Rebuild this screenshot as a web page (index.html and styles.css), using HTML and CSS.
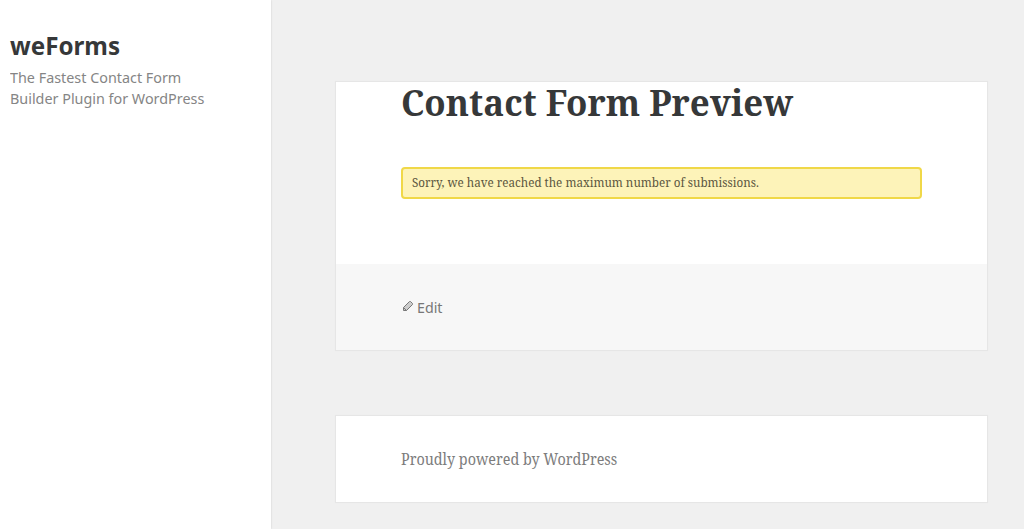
FILE: index.html
```html
<!DOCTYPE html>
<html lang="en">
<head>
<meta charset="utf-8">
<title>Contact Form Preview</title>
<link rel="stylesheet" href="styles.css">
</head>
<body>
<aside class="sidebar">
  <h1 class="site-title">weForms</h1>
  <p class="tagline">The Fastest Contact Form<br>Builder Plugin for WordPress</p>
</aside>
<div class="content">
  <article class="card entry">
    <h2 class="entry-title"><span class="title-text">Contact Form Preview</span></h2>
    <div class="notice"><span class="notice-text">Sorry, we have reached the maximum number of submissions.</span></div>
    <footer class="entry-footer">
      <svg class="edit-icon" viewBox="0 0 12 12" width="12" height="12"><path d="M1.500 10.500V7.500L7.500 1.500h1l2 2v1L4.500 10.500zM1.500 7.500l3 3"/></svg>
      <span class="edit-label">Edit</span>
    </footer>
  </article>
  <footer class="card site-footer"><span class="credit">Proudly powered by WordPress</span></footer>
</div>
</body>
</html>
```
FILE: styles.css
```css
* { box-sizing: border-box; }
body { margin: 0; height: 529px; display: flex; overflow: hidden; background: #f0f0f0; color: #363839; font-family: "Noto Sans", sans-serif; }
.sidebar { width: 271px; height: 529px; padding: 29px 10px 0; background: #fff; box-shadow: 0 0 2px rgba(0,0,0,.15); }
.site-title { margin: 0; font-size: 24.200px; line-height: 34px; font-weight: 700; }
.tagline { margin: 4px 0 0; color: #858585; font-size: 15px; line-height: 21px; white-space: nowrap; transform: scaleX(.957); transform-origin: left; }
.content { width: 651px; margin: 82px 0 0 65px; font-family: "Noto Serif", "Droid Serif", "DejaVu Serif", serif; }
.card { background: #fff; box-shadow: 0 0 1px 1px rgba(0,0,0,.04); }
.entry { height: 268px; display: flex; flex-direction: column; }
.entry-title { margin: 0 65px; height: 85px; font-size: 36px; line-height: 41px; white-space: nowrap; }
.title-text, .notice-text, .credit, .edit-label { display: inline-block; transform-origin: left; }
.title-text { transform: scaleX(.970); }
.notice { height: 32px; margin: 0 65px 65px; padding: 0 8.500px; border: 2px solid #f0d848; border-radius: 4px; background: #fdf3b9; color: #5c573f; font-size: 12px; line-height: 28px; white-space: nowrap; }
.notice-text { transform: scaleX(.971); }
.entry-footer { height: 86px; padding: 0 66px; display: flex; align-items: center; gap: 3px; background: #f7f7f7; color: #777; font-family: "Noto Sans", sans-serif; font-size: 15px; }
.edit-label { transform: scaleX(.95); }
.edit-icon { fill: #ccc; stroke: #777; stroke-width: 1; transform: translateY(-1px); }
.site-footer { height: 86px; margin-top: 66px; padding: 0 65px; line-height: 86px; color: #7c7c7c; font-size: 15.500px; white-space: nowrap; }
.credit { transform: scaleX(.925); }
```
